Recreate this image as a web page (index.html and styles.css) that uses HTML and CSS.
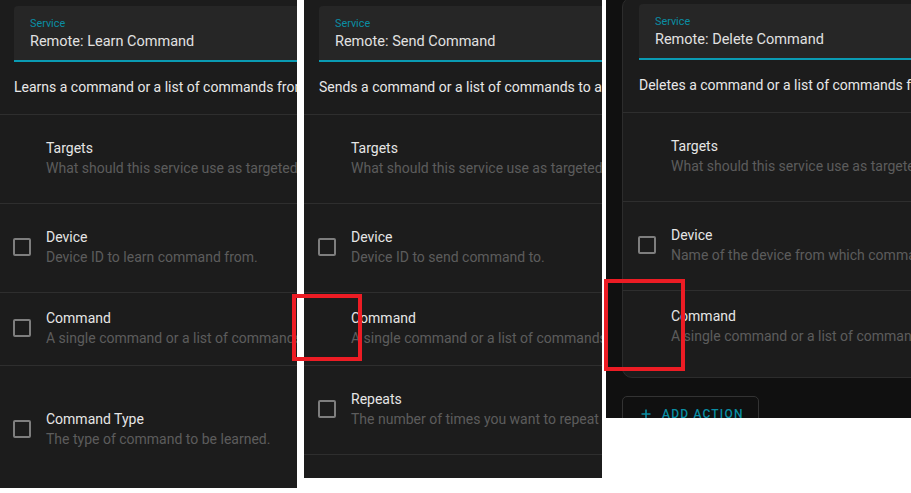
FILE: index.html
```
<!DOCTYPE html>
<html lang="en">
<head>
<meta charset="utf-8">
<title>Remote services</title>
<link rel="stylesheet" href="styles.css">
</head>
<body>
<div class="sheet">
  <section class="shot shot--one">
    <div class="card card--one">
      <div class="field">
        <div class="field__label">Service</div>
        <div class="field__value">Remote: Learn Command</div>
      </div>
      <p class="desc">Learns a command or a list of commands from a device.</p>
      <div class="row row--tall">
        <span class="slot"></span>
        <div class="text"><div class="title">Targets</div><div class="hint">What should this service use as targeted areas, devices or entities.</div></div>
      </div>
      <div class="row row--tall">
        <span class="check"></span>
        <div class="text"><div class="title">Device</div><div class="hint">Device ID to learn command from.</div></div>
      </div>
      <div class="row">
        <span class="check"></span>
        <div class="text"><div class="title">Command</div><div class="hint">A single command or a list of commands to learn.</div></div>
      </div>
      <div class="row row--deep">
        <span class="check"></span>
        <div class="text"><div class="title">Command Type</div><div class="hint">The type of command to be learned.</div></div>
      </div>
    </div>
  </section>

  <section class="shot shot--two">
    <div class="card card--two">
      <div class="field">
        <div class="field__label">Service</div>
        <div class="field__value">Remote: Send Command</div>
      </div>
      <p class="desc">Sends a command or a list of commands to a device.</p>
      <div class="row row--tall">
        <span class="slot"></span>
        <div class="text"><div class="title">Targets</div><div class="hint">What should this service use as targeted areas, devices or entities.</div></div>
      </div>
      <div class="row row--tall">
        <span class="check"></span>
        <div class="text"><div class="title">Device</div><div class="hint">Device ID to send command to.</div></div>
      </div>
      <div class="row">
        <span class="slot"></span>
        <div class="text"><div class="title">Command</div><div class="hint">A single command or a list of commands to send.</div></div>
      </div>
      <div class="row row--tall">
        <span class="check"></span>
        <div class="text"><div class="title">Repeats</div><div class="hint">The number of times you want to repeat the commands.</div></div>
      </div>
      <div class="row row--empty"></div>
    </div>
  </section>

  <section class="shot shot--three">
    <div class="card card--three">
      <div class="field">
        <div class="field__label">Service</div>
        <div class="field__value">Remote: Delete Command</div>
      </div>
      <p class="desc">Deletes a command or a list of commands from the database.</p>
      <div class="row row--tall">
        <span class="slot"></span>
        <div class="text"><div class="title">Targets</div><div class="hint">What should this service use as targeted areas, devices or entities.</div></div>
      </div>
      <div class="row row--tall">
        <span class="check"></span>
        <div class="text"><div class="title">Device</div><div class="hint">Name of the device from which commands will be deleted.</div></div>
      </div>
      <div class="row row--last">
        <span class="slot"></span>
        <div class="text"><div class="title">Command</div><div class="hint">A single command or a list of commands to delete.</div></div>
      </div>
    </div>
    <button class="add" type="button">
      <svg class="add__icon" viewBox="0 0 10 10" width="10" height="10" aria-hidden="true"><path d="M5 0.5V9.5M0.5 5H9.5" stroke="currentColor" stroke-width="1.6" fill="none"/></svg>
      <span>ADD ACTION</span>
    </button>
  </section>

  <div class="mark mark--a"></div>
  <div class="mark mark--b"></div>
</div>
</body>
</html>
```
FILE: styles.css
```
* { box-sizing: border-box; }

html, body {
  margin: 0;
  padding: 0;
  background: #ffffff;
}

body {
  font-family: Roboto, "Liberation Sans", sans-serif;
  width: 911px;
  height: 493px;
  overflow: hidden;
}

.sheet {
  position: relative;
  display: flex;
  align-items: flex-start;
  width: 911px;
  height: 493px;
}

.shot {
  flex: none;
  overflow: hidden;
  background: #1c1c1c;
}

.shot--one { width: 297px; height: 488px; }
.shot--two { width: 298px; height: 478px; margin-left: 7px; }
.shot--three { width: 305px; height: 418px; margin-left: 4px; background: #101010; }

.card {
  width: 640px;
  background: #1c1c1c;
  white-space: nowrap;
}

.card--one { margin-left: -2px; }
.card--two { margin-left: -1px; }
.card--three {
  margin-left: 16px;
  margin-top: -3px;
  border: 1px solid #2c2c2c;
  border-radius: 10px;
  padding-bottom: 16px;
}

.field {
  margin: 6px 0 0 16px;
  height: 56px;
  padding: 11px 16px 0;
  background: #262626;
  border-radius: 4px 4px 0 0;
  border-bottom: 2px solid #0a9bb3;
}

.field__label {
  font-size: 10.8px;
  line-height: 14px;
  color: #0a8ea4;
}

.field__value {
  margin-top: 1px;
  font-size: 14.5px;
  line-height: 20px;
  color: #e1e1e1;
}

.desc {
  margin: 0;
  padding: 15px 16px 17px;
  font-size: 14px;
  line-height: 20px;
  color: #e8e8e8;
}

.row {
  display: flex;
  align-items: center;
  gap: 15px;
  padding: 15px 0 17px 15px;
  border-top: 1px solid #2e2e2e;
}

.row--tall { padding-top: 23px; padding-bottom: 25px; }
.row--deep { padding-top: 43px; padding-bottom: 44px; }
.row--last { padding-bottom: 15px; }
.row--empty { height: 40px; padding: 0; }

.slot, .check {
  flex: none;
  width: 18px;
  height: 18px;
}

.check {
  border: 2px solid #7e7e7e;
  border-radius: 2px;
}

.text {
  font-size: 14px;
  line-height: 20px;
}

.title { color: #e6e6e6; }
.hint { color: #5c5c5c; }

.add {
  display: flex;
  align-items: center;
  gap: 11px;
  margin: 18px 0 0 16px;
  height: 36px;
  padding: 0 14px 0 18px;
  background: transparent;
  border: 1px solid #333333;
  border-radius: 5px;
  color: #0a8ea4;
  font-family: Roboto, "Liberation Sans", sans-serif;
  font-size: 12px;
  font-weight: 500;
  letter-spacing: 1.2px;
}

.add__icon { flex: none; }

.mark {
  position: absolute;
  border: 4px solid #ec1c24;
  pointer-events: none;
}

.mark--a { left: 292px; top: 294px; width: 70px; height: 67px; }
.mark--b { left: 604px; top: 279px; width: 81px; height: 92px; }
```
